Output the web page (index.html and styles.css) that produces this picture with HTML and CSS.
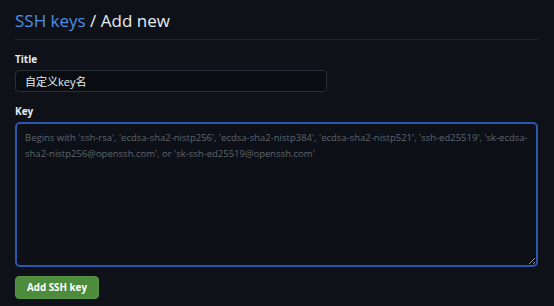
FILE: index.html
```html
<!DOCTYPE html>
<html lang="zh-CN">
<head>
  <meta charset="UTF-8">
  <title>SSH keys / Add new</title>
  <link rel="stylesheet" href="styles.css">
</head>
<body>
  <div class="page">
    <h1 class="page-title"><a href="#">SSH keys</a> / Add new</h1>

    <form class="key-form">
      <div class="field">
        <label for="title">Title</label>
        <input id="title" class="text-input" type="text" value="自定义key名">
      </div>

      <div class="field">
        <label for="key">Key</label>
        <textarea id="key" class="key-input" autofocus placeholder="Begins with 'ssh-rsa', 'ecdsa-sha2-nistp256', 'ecdsa-sha2-nistp384', 'ecdsa-sha2-nistp521', 'ssh-ed25519', 'sk-ecdsa-sha2-nistp256@openssh.com', or 'sk-ssh-ed25519@openssh.com'"></textarea>
      </div>

      <button type="button" class="btn-primary">Add SSH key</button>
    </form>
  </div>
</body>
</html>
```

FILE: styles.css
```css
body {
  margin: 0;
  padding: 0;
  background: #0e1117;
  color: #e6edf3;
  font-family: "Open Sans", "Noto Sans CJK SC", sans-serif;
}
.page {
  padding: 8px 16px 0 15px;
}
.page-title {
  margin: 0;
  padding-bottom: 6px;
  font-size: 17px;
  font-weight: 400;
  line-height: 25px;
  color: #e6edf3;
  border-bottom: 1px solid #21262d;
}
.page-title a {
  color: #4f8fe6;
  text-decoration: none;
}
.key-form {
  display: flex;
  flex-direction: column;
  align-items: flex-start;
}
.field {
  display: flex;
  flex-direction: column;
  width: 100%;
}
.field label {
  font-size: 10px;
  font-weight: 700;
  line-height: 14px;
  margin-top: 12px;
  margin-bottom: 4px;
}
.text-input {
  box-sizing: border-box;
  width: 312px;
  height: 22px;
  padding: 0 9px;
  background: #090c10;
  border: 1px solid #2a2f36;
  border-radius: 4px;
  color: #e6edf3;
  font-family: "Open Sans", "Noto Sans CJK SC", sans-serif;
  font-size: 11px;
  outline: none;
}
.key-input {
  box-sizing: border-box;
  width: 100%;
  height: 145px;
  margin: 0;
  padding: 6px 3px 6px 8px;
  background: #0d1016;
  border: 2px solid #2c55ad;
  border-radius: 5px;
  color: #e6edf3;
  font-family: "Open Sans", sans-serif;
  font-size: 9.5px;
  line-height: 16px;
  outline: none;
  resize: vertical;
}
.key-input::placeholder {
  color: #5f666f;
}
.btn-primary {
  margin-top: 9px;
  padding: 0 11px;
  height: 23px;
  background: #4d8c3c;
  border: 1px solid #569344;
  border-radius: 4px;
  color: #ffffff;
  font-family: "Open Sans", sans-serif;
  font-size: 9.8px;
  font-weight: 700;
  cursor: pointer;
}
```
